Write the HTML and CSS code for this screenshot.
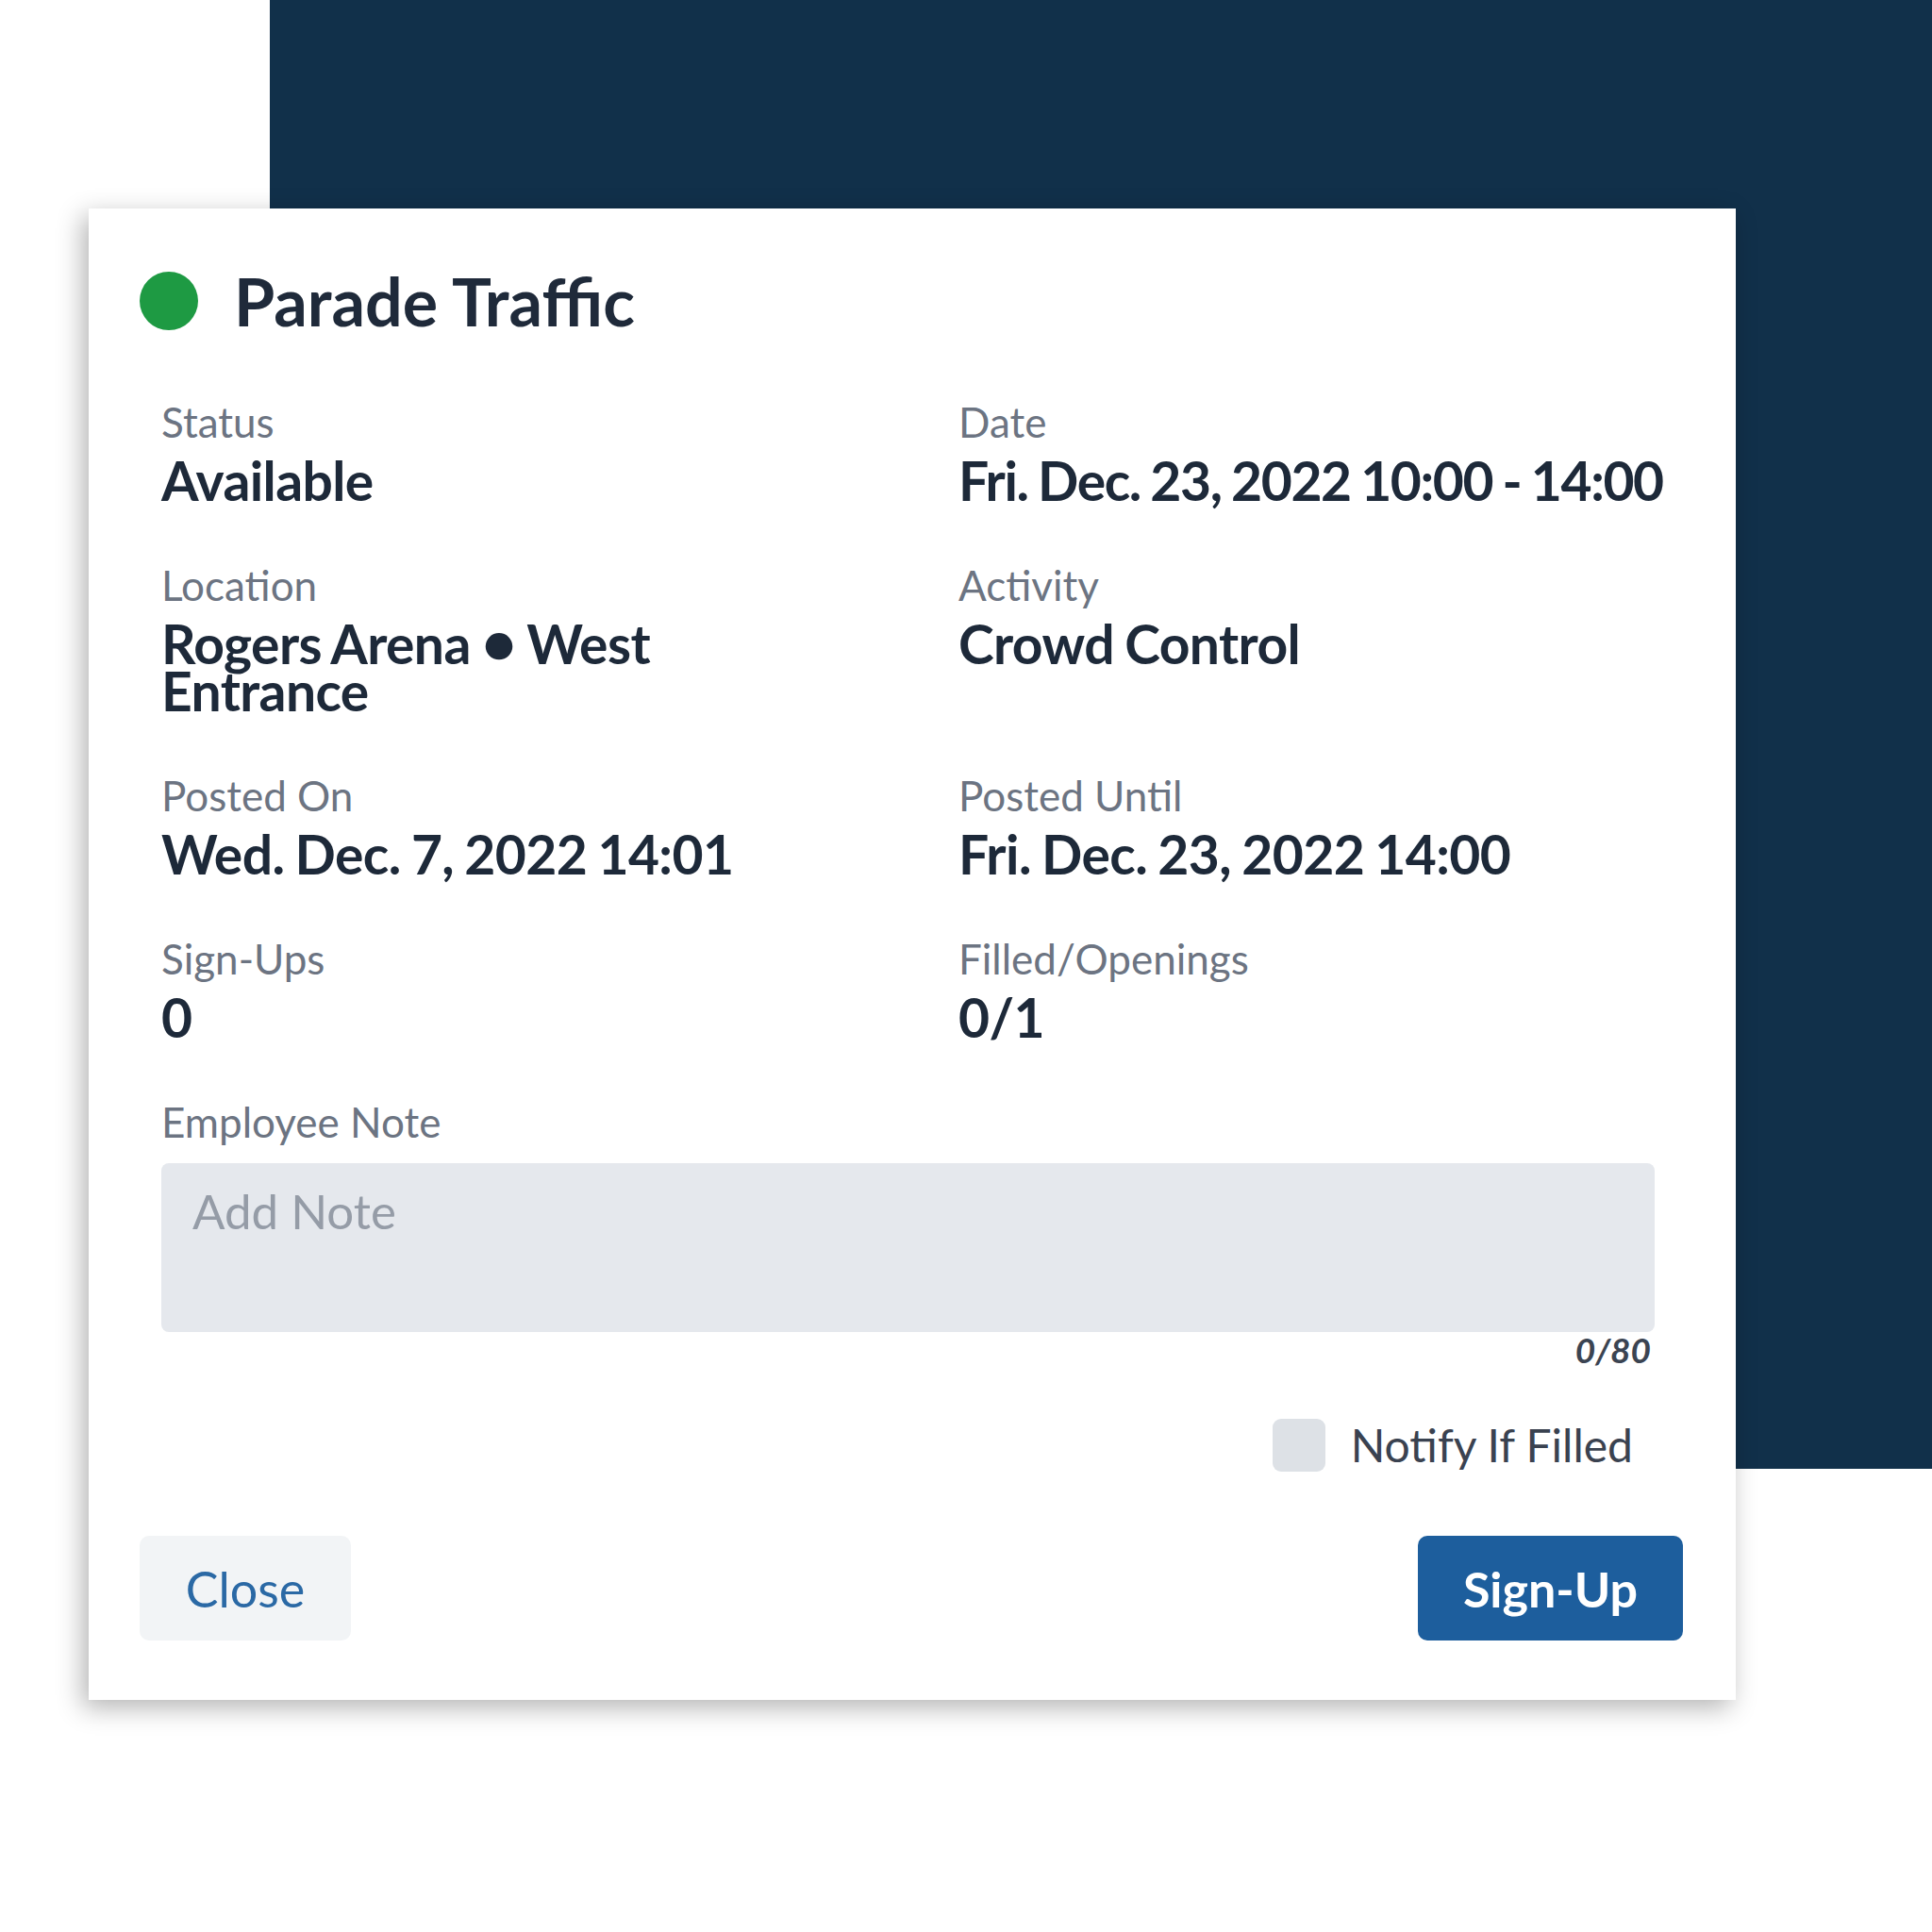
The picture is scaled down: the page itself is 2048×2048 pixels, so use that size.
FILE: index.html
```html
<!DOCTYPE html>
<html lang="en">
<head>
    <meta charset="UTF-8">
    <meta name="viewport" content="width=device-width, initial-scale=1.0">
    <title>Parade Traffic - Shift Details</title>
    <link rel="stylesheet" href="styles.css">
</head>
<body>

    <div class="stage">
        <div class="backdrop"></div>

        <div class="shift-card">
            <div class="shift-header">
                <span class="status-dot"></span>
                <h1 class="shift-title">Parade Traffic</h1>
            </div>

            <div class="shift-body">
                <div class="details-grid">
                    <div class="field">
                        <span class="field-label">Status</span>
                        <div class="field-value">Available</div>
                    </div>
                    <div class="field">
                        <span class="field-label">Date</span>
                        <div class="field-value nowrap">Fri. Dec. 23, 2022 10:00 - 14:00</div>
                    </div>
                    <div class="field">
                        <span class="field-label">Location</span>
                        <div class="field-value">Rogers Arena <span class="sep">&bull;</span> West Entrance</div>
                    </div>
                    <div class="field">
                        <span class="field-label">Activity</span>
                        <div class="field-value">Crowd Control</div>
                    </div>
                    <div class="field">
                        <span class="field-label">Posted On</span>
                        <div class="field-value">Wed. Dec. 7, 2022 14:01</div>
                    </div>
                    <div class="field">
                        <span class="field-label">Posted Until</span>
                        <div class="field-value">Fri. Dec. 23, 2022 14:00</div>
                    </div>
                    <div class="field">
                        <span class="field-label">Sign-Ups</span>
                        <div class="field-value">0</div>
                    </div>
                    <div class="field">
                        <span class="field-label">Filled/Openings</span>
                        <div class="field-value">0/1</div>
                    </div>
                </div>

                <div class="note-section">
                    <label class="field-label" for="employee-note">Employee Note</label>
                    <textarea id="employee-note" class="note-input" placeholder="Add Note" maxlength="80"></textarea>
                    <div class="note-counter">0/80</div>
                </div>

                <label class="notify-row">
                    <input type="checkbox" class="notify-check">
                    <span class="notify-box"></span>
                    <span class="notify-text">Notify If Filled</span>
                </label>
            </div>

            <div class="shift-footer">
                <button type="button" class="btn btn-close">Close</button>
                <button type="button" class="btn btn-signup">Sign-Up</button>
            </div>
        </div>
    </div>

</body>
</html>
```

FILE: styles.css
```css
body {
    margin: 0;
    font-family: 'Lato', 'Liberation Sans', sans-serif;
    background: #ffffff;
    color: #1d2939;
}
.stage {
    display: grid;
    width: 2048px;
    height: 2048px;
}
.backdrop {
    grid-area: 1 / 1;
    margin-left: 286px;
    height: 1557px;
    background-color: #11304a;
}
.shift-card {
    grid-area: 1 / 1;
    align-self: start;
    margin: 221px 0 0 94px;
    width: 1746px;
    box-sizing: border-box;
    padding: 56px 56px 63px 54px;
    background-color: #ffffff;
    box-shadow: -6px 8px 26px rgba(0, 0, 0, 0.3);
}
.shift-header {
    display: flex;
    align-items: center;
    gap: 38px;
}
.status-dot {
    width: 62px;
    height: 62px;
    border-radius: 50%;
    background-color: #1e9a43;
    flex-shrink: 0;
}
.shift-title {
    margin: 0;
    font-size: 70px;
    line-height: 1.2;
    font-weight: 700;
    color: #1f2a3a;
}
.shift-body {
    padding: 0 30px 0 23px;
}
.details-grid {
    display: grid;
    grid-template-columns: repeat(2, minmax(0, 1fr));
    column-gap: 107px;
    row-gap: 60px;
    margin-top: 60px;
}
.field-label {
    display: block;
    font-size: 44px;
    line-height: 53px;
    color: #6c7482;
}
.field-value {
    max-width: 700px;
    margin-top: 10px;
    font-size: 57px;
    line-height: 50px;
    font-weight: 700;
    color: #1d2939;
    letter-spacing: -0.6px;
    word-spacing: -2px;
}
.nowrap {
    max-width: none;
    white-space: nowrap;
    letter-spacing: -1.4px;
}
.sep {
    font-size: 1.15em;
    line-height: 0;
}
.note-section {
    margin-top: 60px;
}
.note-input {
    display: block;
    width: 100%;
    height: 179px;
    margin-top: 17px;
    box-sizing: border-box;
    padding: 20px 33px;
    border: none;
    border-radius: 8px;
    background-color: #e5e8ed;
    font-family: inherit;
    font-size: 51px;
    line-height: 1.2;
    resize: none;
}
.note-input::placeholder {
    color: #959ca7;
}
.note-counter {
    text-align: right;
    padding-right: 4px;
    font-size: 37px;
    line-height: 1;
    font-style: italic;
    font-weight: 700;
    color: #3b4452;
}
.notify-row {
    display: flex;
    justify-content: flex-end;
    align-items: center;
    gap: 27px;
    margin-top: 54px;
    padding-right: 23px;
}
.notify-check {
    display: none;
}
.notify-box {
    width: 56px;
    height: 56px;
    border-radius: 9px;
    background-color: #dde1e6;
}
.notify-text {
    font-size: 48px;
    color: #3a4250;
}
.shift-footer {
    display: flex;
    justify-content: space-between;
    margin-top: 68px;
}
.btn {
    height: 111px;
    border: none;
    border-radius: 10px;
    font-family: inherit;
    font-size: 52px;
    cursor: pointer;
}
.btn-close {
    width: 224px;
    background-color: #f2f4f6;
    color: #2b69a5;
}
.btn-signup {
    width: 281px;
    background-color: #1d5e9d;
    color: #ffffff;
    font-weight: 700;
}
```
